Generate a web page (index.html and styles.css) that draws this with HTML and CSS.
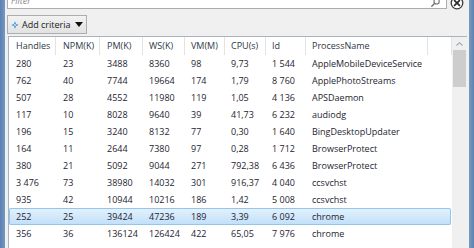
FILE: index.html
```html
<!DOCTYPE html>
<html>
<head>
<meta charset="utf-8">
<link rel="stylesheet" href="styles.css">
</head>
<body>
<div class="window">
  <div class="frame frame-left"></div>
  <div class="content">
    <div class="filter-row">
      <div class="filter-box">
        <span class="placeholder">Filter</span>
        <svg class="search" width="9" height="9" viewBox="0 0 9 9"><circle cx="5.6" cy="3.4" r="2.6" fill="none" stroke="#707070" stroke-width="1.1"/><line x1="3.7" y1="5.3" x2="0.8" y2="8.2" stroke="#707070" stroke-width="1.4" stroke-linecap="round"/></svg>
      </div>
      <div class="clear">
        <svg width="14" height="14" viewBox="0 0 14 14"><circle cx="7" cy="7" r="5.8" fill="#fff" stroke="#3a3a3a" stroke-width="1.3"/><path d="M4.6 4.6 L9.4 9.4 M9.4 4.6 L4.6 9.4" stroke="#2a2a2a" stroke-width="1.7" stroke-linecap="round"/></svg>
      </div>
    </div>
    <div class="toolbar">
      <button class="add-btn">
        <svg class="plus" width="8" height="8" viewBox="0 0 8 8"><path d="M4 0.3 L5 3 L7.7 4 L5 5 L4 7.7 L3 5 L0.3 4 L3 3 Z" fill="#2f86dc"/><circle cx="4" cy="4" r="1.3" fill="#a9d4fb"/></svg>
        <span>Add criteria</span>
        <svg class="caret" width="8" height="5" viewBox="0 0 8 5"><polygon points="0,0 8,0 4,5" fill="#111"/></svg>
      </button>
    </div>
    <div class="list">
      <div class="list-main">
        <div class="row header">
          <div>Handles</div><div>NPM(K)</div><div>PM(K)</div><div>WS(K)</div><div>VM(M)</div><div>CPU(s)</div><div>Id</div><div>ProcessName</div><div></div>
        </div>
        <div class="row"><div>280</div><div>23</div><div>3488</div><div>8360</div><div>98</div><div>9,73</div><div>1 544</div><div>AppleMobileDeviceService</div><div></div></div>
        <div class="row"><div>762</div><div>40</div><div>7744</div><div>19664</div><div>174</div><div>1,79</div><div>8 760</div><div>ApplePhotoStreams</div><div></div></div>
        <div class="row"><div>507</div><div>28</div><div>4552</div><div>11980</div><div>119</div><div>1,05</div><div>4 136</div><div>APSDaemon</div><div></div></div>
        <div class="row"><div>117</div><div>10</div><div>8028</div><div>9640</div><div>39</div><div>41,73</div><div>6 232</div><div>audiodg</div><div></div></div>
        <div class="row"><div>196</div><div>15</div><div>3240</div><div>8132</div><div>77</div><div>0,30</div><div>1 640</div><div>BingDesktopUpdater</div><div></div></div>
        <div class="row"><div>164</div><div>11</div><div>2644</div><div>7380</div><div>97</div><div>0,28</div><div>1 712</div><div>BrowserProtect</div><div></div></div>
        <div class="row"><div>380</div><div>21</div><div>5092</div><div>9044</div><div>271</div><div>792,38</div><div>6 436</div><div>BrowserProtect</div><div></div></div>
        <div class="row"><div>3 476</div><div>73</div><div>38980</div><div>14032</div><div>301</div><div>916,37</div><div>4 040</div><div>ccsvchst</div><div></div></div>
        <div class="row"><div>935</div><div>42</div><div>10944</div><div>10216</div><div>186</div><div>1,42</div><div>5 008</div><div>ccsvchst</div><div></div></div>
        <div class="row selected"><div>252</div><div>25</div><div>39424</div><div>47236</div><div>189</div><div>3,39</div><div>6 092</div><div>chrome</div><div></div></div>
        <div class="row"><div>356</div><div>36</div><div>136124</div><div>126424</div><div>422</div><div>65,05</div><div>7 976</div><div>chrome</div><div></div></div>
      </div>
      <div class="scrollbar">
        <div class="sb-up"><svg width="7" height="4" viewBox="0 0 7 4"><polyline points="0.5,3.5 3.5,0.7 6.5,3.5" fill="none" stroke="#a6a6a6" stroke-width="1.1"/></svg></div>
        <div class="sb-thumb"></div>
        <div class="sb-track"></div>
      </div>
    </div>
  </div>
  <div class="frame frame-right"></div>
</div>
</body>
</html>
```

FILE: styles.css
```css
html, body {
  margin: 0;
  padding: 0;
}

.window {
  display: flex;
  width: 474px;
  height: 248px;
  overflow: hidden;
  background: #f0f0f0;
  font-family: "Open Sans", "Noto Sans", sans-serif;
  font-size: 9px;
  color: #1e2430;
}

.frame {
  width: 5px;
  flex: none;
}

.frame-left {
  background: linear-gradient(to right, #5b80af, #7598c4);
}

.frame-right {
  background: linear-gradient(to right, #7898c0, #5d82b0);
}

.content {
  flex: 1;
  display: flex;
  flex-direction: column;
  padding: 0 2px;
  min-width: 0;
}

.filter-row {
  display: flex;
  align-items: flex-end;
  gap: 3px;
  margin-top: -9px;
  height: 18px;
  flex: none;
}

.filter-box {
  flex: 1;
  height: 18px;
  box-sizing: border-box;
  border: 1px solid #abadb3;
  background: #fff;
  display: flex;
  align-items: flex-end;
  justify-content: space-between;
  padding: 0 6px 1px 3px;
}

.placeholder {
  font-style: italic;
  color: #8a8a8a;
  line-height: 12px;
}

.search {
  display: block;
  margin-bottom: 0;
}

.clear {
  width: 14px;
  height: 14px;
  margin-right: 3px;
  margin-bottom: -1px;
}

.clear svg {
  display: block;
}

.toolbar {
  margin-top: 6px;
  display: flex;
  flex: none;
}

.add-btn {
  display: inline-flex;
  align-items: center;
  gap: 3px;
  height: 19px;
  box-sizing: border-box;
  padding: 0 3px 0 3px;
  border: 1px solid #adadad;
  background: linear-gradient(#f2f2f2, #e2e2e2);
  font-family: inherit;
  font-size: 9px;
  color: #1a1a1a;
  margin: 0;
}

.add-btn span {
  margin-right: 1px;
}

.plus, .caret {
  display: block;
}

.list {
  margin-top: 2px;
  margin-left: 1px;
  flex: 1;
  display: flex;
  border: 1px solid #a9b2bf;
  border-bottom: none;
  background: #fff;
  min-height: 0;
}

.list-main {
  width: 443px;
  flex: none;
}

.row {
  display: grid;
  grid-template-columns: 47px 44px 43px 42px 40px 41px 40px 122px 24px;
  height: 17px;
  line-height: 17px;
  white-space: nowrap;
}

.row > div {
  padding-left: 6px;
  overflow: hidden;
}

.row > div:nth-child(1),
.row > div:nth-child(2),
.row > div:nth-child(3) {
  padding-left: 7px;
}

.header {
  height: 18px;
  line-height: 18px;
  color: #2f3846;
}

.header > div {
  border-right: 1px solid #e3e3e3;
}

.selected {
  background: linear-gradient(#e4f2fd, #c0dff9);
  box-shadow: inset 0 0 0 1px #93c6ef;
  border-radius: 2px;
  margin-right: 1px;
}

.scrollbar {
  width: 15px;
  flex: none;
  display: flex;
  flex-direction: column;
  background: #f0f0f0;
}

.sb-up {
  height: 13px;
  display: flex;
  align-items: center;
  justify-content: center;
}

.sb-up svg {
  display: block;
}

.sb-thumb {
  height: 37px;
  background: #cdcdcd;
  margin: 0 1px;
}

.sb-track {
  flex: 1;
}
```
